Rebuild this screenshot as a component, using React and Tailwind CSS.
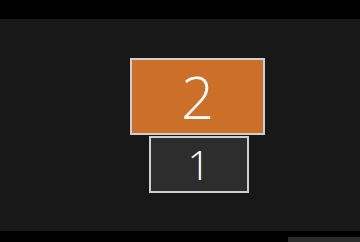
import React from 'react';

const monitors = [
  { id: 2, className: 'left-[130px] top-[39px] w-[135px] h-[77px] bg-[#cc7029]', text: 'text-[58px]' },
  { id: 1, className: 'left-[149px] top-[117px] w-[100px] h-[57px] bg-[#2d2d2d]', text: 'text-[40px]' },
];

export default function App() {
  return (
    <div className="w-[360px] h-[242px] bg-black flex flex-col overflow-hidden" style={{ fontFamily: '"Open Sans", "Noto Sans", sans-serif' }}>
      <div className="h-[19px] bg-black" />
      <div className="relative h-[212px] bg-[#181818]">
        {monitors.map((m) => (
          <div
            key={m.id}
            className={`absolute flex items-center justify-center border-2 border-[#cfcfcf] text-white font-light leading-none ${m.className}`}
          >
            <span className={m.text}>{m.id}</span>
          </div>
        ))}
      </div>
      <div className="flex-1 flex justify-end items-end">
        <div className="w-[72px] h-[5px] bg-[#2a2a2a]" />
      </div>
    </div>
  );
}
